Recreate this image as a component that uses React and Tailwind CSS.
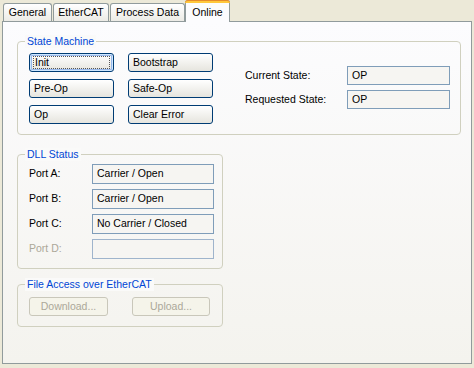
import React from 'react';

function Tab({ w, active, children }) {
  if (active) {
    return (
      <div className={`${w} h-[22px] -mb-px relative z-10 rounded-t-[3px] border border-b-0 border-[#919B9C] bg-[#FCFCFE] flex flex-col`}>
        <div className="h-[3px] -mx-px -mt-px rounded-t-[3px] bg-[#FFC83C] border-t border-[#E68B2C]" />
        <div className="flex-1 flex items-center justify-center text-black">{children}</div>
      </div>
    );
  }
  return (
    <div className={`${w} h-[18px] rounded-t-[3px] border border-b-0 border-[#919B9C] bg-gradient-to-b from-white to-[#ECEBE6] flex items-center justify-center text-black`}>
      {children}
    </div>
  );
}

function Group({ title, className, children }) {
  return (
    <div className={`relative border border-[#D0D0BF] rounded-[4px] ${className}`}>
      <span className="absolute -top-[7px] left-[7px] px-[2px] leading-[13px] text-[#0046D5] bg-[#FAFAF9]">{title}</span>
      {children}
    </div>
  );
}

function Btn({ children, focus, disabled, center, w = 'w-[85px]' }) {
  if (disabled) {
    return (
      <div className={`${w} h-[19px] rounded-[3px] border border-[#C9C7BA] bg-[#F5F4EA] text-[#ACA899] flex items-center justify-center`}>
        {children}
      </div>
    );
  }
  return (
    <div className={`${w} h-[19px] rounded-[3px] border border-[#003C74] bg-gradient-to-b from-white to-[#E6E5DE] flex items-center ${center ? 'justify-center' : 'pl-[4px]'} ${focus ? 'shadow-[inset_0_0_0_1px_#CEE7FF,inset_0_0_0_2px_#98B8EA]' : ''}`}>
      {focus ? (
        <span className="h-[13px] flex-1 mr-[3px] -ml-[1px] pl-[1px] border border-dotted border-[#555] leading-[11px]">{children}</span>
      ) : children}
    </div>
  );
}

function Field({ value, w, h = 'h-[19px]', dim }) {
  return (
    <div className={`${w} ${h} border ${dim ? 'border-[#9FB4CC]' : 'border-[#7F9DB9]'} bg-[#F6F5F2] flex items-center pl-[4px] text-black`}>
      {value}
    </div>
  );
}

export default function App() {
  return (
    <div className="w-[474px] h-[368px] bg-[#ECE9D8] font-['Liberation_Sans',Arial,sans-serif] text-[10.5px] text-black overflow-hidden">
      <div className="h-[21px] flex items-end pl-[3px]">
        <Tab w="w-[49px]">General</Tab>
        <div className="w-[1px]" />
        <Tab w="w-[56px]">EtherCAT</Tab>
        <div className="w-[1px]" />
        <Tab w="w-[75px]">Process Data</Tab>
        <Tab w="w-[45px]" active>Online</Tab>
      </div>
      <div className="ml-[2px] w-[470px] h-[343px] border border-[#919B9C] bg-gradient-to-b from-[#FCFCFE] to-[#F4F3EE] pl-[14px] pt-[19px]">
        <Group title="State Machine" className="w-[444px] h-[94px] pl-[11px] pt-[11px] flex">
          <div className="grid grid-cols-[85px_85px] gap-x-[14px] gap-y-[7px] content-start">
            <Btn focus>Init</Btn>
            <Btn>Bootstrap</Btn>
            <Btn>Pre-Op</Btn>
            <Btn>Safe-Op</Btn>
            <Btn>Op</Btn>
            <Btn>Clear Error</Btn>
          </div>
          <div className="ml-[32px] mt-[13px] flex flex-col gap-[5px]">
            <div className="flex items-center">
              <span className="w-[102px]">Current State:</span>
              <Field value="OP" w="w-[103px]" />
            </div>
            <div className="flex items-center">
              <span className="w-[102px]">Requested State:</span>
              <Field value="OP" w="w-[103px]" />
            </div>
          </div>
        </Group>

        <Group title="DLL Status" className="mt-[19px] w-[206px] h-[115px] pl-[11px] pt-[9px] flex flex-col gap-[5px]">
          {[
            ['Port A:', 'Carrier / Open'],
            ['Port B:', 'Carrier / Open'],
            ['Port C:', 'No Carrier / Closed'],
          ].map(([l, v]) => (
            <div key={l} className="flex items-center">
              <span className="w-[63px]">{l}</span>
              <Field value={v} w="w-[122px]" h="h-[20px]" />
            </div>
          ))}
          <div className="flex items-center">
            <span className="w-[63px] text-[#ACA899]">Port D:</span>
            <Field value="" w="w-[122px]" h="h-[20px]" dim />
          </div>
        </Group>

        <Group title="File Access over EtherCAT" className="mt-[15px] w-[206px] h-[43px] pl-[11px] pt-[12px] flex gap-[24px]">
          <Btn disabled w="w-[79px]">Download...</Btn>
          <Btn disabled w="w-[78px]">Upload...</Btn>
        </Group>
      </div>
    </div>
  );
}
